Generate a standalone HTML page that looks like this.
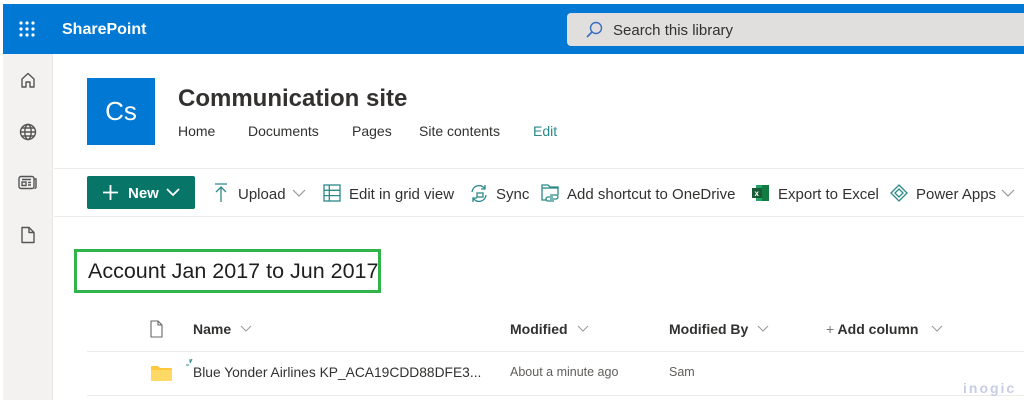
<!DOCTYPE html>
<html><head><meta charset="utf-8"><style>
*{margin:0;padding:0;box-sizing:border-box}
body{width:1024px;height:400px;overflow:hidden;background:#fff;font-family:"Liberation Sans",sans-serif;color:#323130;position:relative}
.a{position:absolute;white-space:nowrap}
svg{position:absolute;overflow:visible}
</style></head><body>
<div class="a" style="left:3px;top:4px;width:1021px;height:50px;background:#0078d4"></div>
<svg style="left:19px;top:21px" width="16" height="16"><g fill="#fff"><circle cx="2" cy="2" r="1.6"/><circle cx="8" cy="2" r="1.6"/><circle cx="14" cy="2" r="1.6"/><circle cx="2" cy="8" r="1.6"/><circle cx="8" cy="8" r="1.6"/><circle cx="14" cy="8" r="1.6"/><circle cx="2" cy="14" r="1.6"/><circle cx="8" cy="14" r="1.6"/><circle cx="14" cy="14" r="1.6"/></g></svg>
<div class="a" style="left:62px;top:21px;color:#fff;font-weight:bold;font-size:16px">SharePoint</div>
<div class="a" style="left:567px;top:13px;width:460px;height:33px;background:#e1dfdd;border-radius:4px"></div>
<svg style="left:585px;top:21px" width="18" height="18"><circle cx="11" cy="7" r="5.5" fill="none" stroke="#3a6cc4" stroke-width="1.4"/><path d="M7 11 L2 16" stroke="#3a6cc4" stroke-width="1.6"/></svg>
<div class="a" style="left:613px;top:22px;font-size:15px;color:#323130">Search this library</div>
<div class="a" style="left:3px;top:54px;width:50px;height:346px;background:#f3f2f1;border-right:1px solid #e8e6e4"></div>
<svg style="left:19px;top:71px" width="18" height="18"><path d="M3 16V8L9 2.5 15 8V16H11V11H7V16Z" fill="none" stroke="#555" stroke-width="1.4" stroke-linejoin="round"/></svg>
<svg style="left:19px;top:123px" width="18" height="18"><g fill="none" stroke="#555" stroke-width="1.4"><circle cx="9" cy="9" r="7.5"/><ellipse cx="9" cy="9" rx="3.2" ry="7.5"/><path d="M1.5 9H16.5M3 5H15M3 13H15"/></g></svg>
<svg style="left:18px;top:175px" width="20" height="16"><g fill="none" stroke="#555" stroke-width="1.4"><rect x="1" y="1.5" width="15" height="12" rx="2"/><path d="M16 4H18V12A1.5 1.5 0 0 1 16.5 13.5"/><rect x="4" y="7" width="4" height="3.5"/><path d="M4 4.5H13M10 7.5H13M10 10H13"/></g></svg>
<svg style="left:21px;top:226px" width="14" height="18"><path d="M1 1.5H8L13 6.5V16.5H1Z M8 1.5V6.5H13" fill="none" stroke="#555" stroke-width="1.4" stroke-linejoin="round"/></svg>
<div class="a" style="left:87px;top:78px;width:68px;height:67px;background:#0078d4;color:#fff;font-size:26px;text-align:center;line-height:67px">Cs</div>
<div class="a" style="left:178px;top:85px;font-size:24px;font-weight:bold;color:#323130">Communication site</div>
<div class="a" style="left:178px;top:123px;font-size:14px">Home</div>
<div class="a" style="left:248px;top:123px;font-size:14px">Documents</div>
<div class="a" style="left:352px;top:123px;font-size:14px">Pages</div>
<div class="a" style="left:419px;top:123px;font-size:14px">Site contents</div>
<div class="a" style="left:533px;top:123px;font-size:14px;color:#2b8a8a">Edit</div>
<div class="a" style="left:54px;top:168px;width:970px;height:1px;background:#edebe9"></div>
<div class="a" style="left:54px;top:216px;width:970px;height:1px;background:#edebe9"></div>
<div class="a" style="left:87px;top:176px;width:108px;height:33px;background:#077568;border-radius:2px"></div>
<svg style="left:103px;top:185px" width="15" height="15"><path d="M7.5 0V15M0 7.5H15" stroke="#fff" stroke-width="1.8"/></svg>
<div class="a" style="left:128px;top:185px;color:#fff;font-weight:bold;font-size:15px">New</div>
<svg style="left:166px;top:188px" width="14" height="8"><path d="M1 1L7 7 13 1" fill="none" stroke="#fff" stroke-width="1.8"/></svg>
<svg style="left:214px;top:183px" width="14" height="20"><path d="M1 1H13M7 4V19M2 9L7 4 12 9" fill="none" stroke="#2b8a8a" stroke-width="1.3"/></svg>
<div class="a" style="left:238px;top:186px;font-size:15px">Upload</div>
<svg style="left:292px;top:189px" width="14" height="8"><path d="M1 1L7 7 13 1" fill="none" stroke="#999" stroke-width="1.2"/></svg>
<svg style="left:323px;top:184px" width="18" height="18"><g fill="none" stroke="#2b8a8a" stroke-width="1.3"><rect x="1" y="1" width="16" height="16"/><path d="M1 6.3H17M1 11.6H17M6.3 1V17"/></g></svg>
<div class="a" style="left:349px;top:186px;font-size:15px">Edit in grid view</div>
<svg style="left:469px;top:184px" width="20" height="19"><g fill="none" stroke="#2b8a8a" stroke-width="1.3"><path d="M3 8A7 7 0 0 1 16 5M16 1V5H12"/><path d="M17 11A7 7 0 0 1 4 14M4 18V14H8"/><rect x="8" y="9" width="6" height="4"/></g></svg>
<div class="a" style="left:496px;top:186px;font-size:15px">Sync</div>
<svg style="left:541px;top:184px" width="18" height="18"><g fill="none" stroke="#2b8a8a" stroke-width="1.3"><path d="M1 4V1H7L9 3H17V11M1 4V16H6"/><path d="M1 4H17"/><path d="M9 11H15A2 2 0 0 1 15 15H9M12 13H7A2 2 0 0 0 7 17H13"/></g></svg>
<div class="a" style="left:567px;top:186px;font-size:15px">Add shortcut to OneDrive</div>
<svg style="left:752px;top:185px" width="17" height="16"><rect x="4" y="0" width="13" height="16" fill="#21a366"/><rect x="10" y="0" width="7" height="16" fill="#107c41"/><rect x="0" y="3" width="10" height="10" fill="#185c37"/><text x="2.5" y="11" font-size="8" fill="#fff" font-family="Liberation Sans" font-weight="bold">x</text></svg>
<div class="a" style="left:778px;top:186px;font-size:15px">Export to Excel</div>
<svg style="left:890px;top:184px" width="18" height="18"><g fill="none" stroke="#2b8a8a" stroke-width="1.3"><path d="M9 1L17 9 9 17 1 9Z"/><path d="M9 5L13 9 9 13 5 9Z"/></g></svg>
<div class="a" style="left:916px;top:186px;font-size:15px">Power Apps</div>
<svg style="left:1001px;top:189px" width="14" height="8"><path d="M1 1L7 7 13 1" fill="none" stroke="#999" stroke-width="1.2"/></svg>
<div class="a" style="left:74px;top:249px;width:307px;height:44px;border:3px solid #2fb34a"></div>
<div class="a" style="left:88px;top:259px;font-size:21.5px;color:#201f1e">Account Jan 2017 to Jun 2017</div>
<svg style="left:150px;top:320px" width="13" height="18"><path d="M1 1H8L12 5V17H1Z M8 1V5H12" fill="none" stroke="#666" stroke-width="1.1" stroke-linejoin="round"/></svg>
<div class="a" style="left:193px;top:321px;font-size:14px;font-weight:bold;color:#323130">Name</div>
<div class="a" style="left:510px;top:321px;font-size:14px;font-weight:bold;color:#323130">Modified</div>
<div class="a" style="left:669px;top:321px;font-size:14px;font-weight:bold;color:#323130">Modified By</div>
<div class="a" style="left:826px;top:321px;font-size:14px;font-weight:bold;color:#323130"><span style="font-weight:normal;color:#777">+</span> Add column</div>
<svg style="left:240px;top:325px" width="12" height="7"><path d="M1 1L6 6 11 1" fill="none" stroke="#999" stroke-width="1"/></svg>
<svg style="left:577px;top:325px" width="12" height="7"><path d="M1 1L6 6 11 1" fill="none" stroke="#999" stroke-width="1"/></svg>
<svg style="left:757px;top:325px" width="12" height="7"><path d="M1 1L6 6 11 1" fill="none" stroke="#999" stroke-width="1"/></svg>
<svg style="left:931px;top:325px" width="12" height="7"><path d="M1 1L6 6 11 1" fill="none" stroke="#999" stroke-width="1"/></svg>
<div class="a" style="left:87px;top:351px;width:937px;height:1px;background:#edebe9"></div>
<div class="a" style="left:87px;top:395px;width:937px;height:1px;background:#edebe9"></div>
<svg style="left:151px;top:365px" width="21" height="16"><path d="M0 2A1 1 0 0 1 1 1H7L9 3H20A1 1 0 0 1 21 4V15A1 1 0 0 1 20 16H1A1 1 0 0 1 0 15Z" fill="#ffc83d"/><path d="M0 5H21V15A1 1 0 0 1 20 16H1A1 1 0 0 1 0 15Z" fill="#ffd966"/></svg>
<svg style="left:185px;top:358px" width="8" height="8"><path d="M1 7H4M5 5L7 1M5 4L5 1" stroke="#2b8a8a" stroke-width="1"/></svg>
<div class="a" style="left:193px;top:365px;font-size:13.8px;color:#323130">Blue Yonder Airlines KP_ACA19CDD88DFE3...</div>
<div class="a" style="left:510px;top:365px;font-size:12.5px;color:#605e5c">About a minute ago</div>
<div class="a" style="left:669px;top:365px;font-size:12.5px;color:#605e5c">Sam</div>
<div class="a" style="left:963px;top:380px;font-size:14px;font-weight:bold;color:#c8cde4;letter-spacing:2px">inogic</div>
</body></html>
